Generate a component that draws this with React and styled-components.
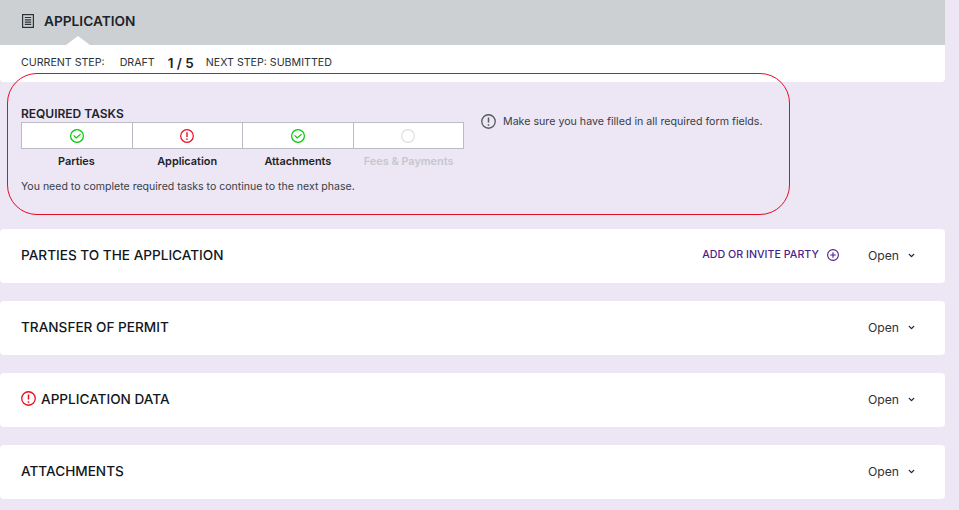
import React from "react";
import styled, { createGlobalStyle } from "styled-components";
import { ChevronDown } from "lucide-react";

const tasks = [
  { name: "Parties", status: "done" },
  { name: "Application", status: "error" },
  { name: "Attachments", status: "done" },
  { name: "Fees & Payments", status: "idle" },
];

function CheckIcon() {
  return (
    <svg width="14" height="14" viewBox="0 0 14 14" fill="none" stroke="#00c800" strokeWidth="1.2">
      <circle cx="7" cy="7" r="6.4" />
      <path d="M3.6 6.4l2.6 2.6 4.4-3.9" />
    </svg>
  );
}

function AlertIcon({ color = "#f00a1e", size = 14, width = 1.2 }) {
  return (
    <svg width={size} height={size} viewBox="0 0 14 14" fill="none" stroke={color} strokeWidth={width}>
      <circle cx="7" cy="7" r="6.3" />
      <path d="M7 3.2v4.8M7 9.6v1.3" strokeWidth="1.4" />
    </svg>
  );
}

function EmptyIcon() {
  return (
    <svg width="14" height="14" viewBox="0 0 14 14" fill="none" stroke="#dfdfe2" strokeWidth="1.2">
      <circle cx="7" cy="7" r="6.4" />
    </svg>
  );
}

function DocIcon() {
  return (
    <svg width="12" height="14" viewBox="0 0 12 14" fill="none" stroke="#2b3238" strokeWidth="1.2">
      <rect x="0.6" y="0.6" width="10.8" height="12.8" />
      <path d="M2.8 3.5h6.4M2.8 5.8h6.4M2.8 8.1h6.4M2.8 10.4h6.4" />
    </svg>
  );
}

function PlusIcon() {
  return (
    <svg width="12" height="12" viewBox="0 0 12 12" fill="none" stroke="#4d1d8c" strokeWidth="1.1">
      <circle cx="6" cy="6" r="5.4" />
      <path d="M6 3.2v5.6M3.2 6h5.6" />
    </svg>
  );
}

function Section({ title, alert, children }) {
  return (
    <Card>
      <CardTitle>
        {alert && <AlertIcon size={15} />}
        {title}
      </CardTitle>
      <CardActions>
        {children}
        <OpenToggle>
          Open
          <ChevronDown size={9} strokeWidth={3.5} color="#1c2329" />
        </OpenToggle>
      </CardActions>
    </Card>
  );
}

export default function App() {
  return (
    <>
      <GlobalStyle />
      <Page>
        <Header>
          <DocIcon />
          <HeaderTitle>APPLICATION</HeaderTitle>
          <Notch />
        </Header>
        <StepRow>
          <StepLabel>CURRENT STEP:</StepLabel>
          <StepDraft>DRAFT</StepDraft>
          <StepCount>1 / 5</StepCount>
          <StepLabel>NEXT STEP: SUBMITTED</StepLabel>
        </StepRow>
        <TasksArea>
          <TasksColumn>
            <TasksTitle>REQUIRED TASKS</TasksTitle>
            <TaskGrid>
              {tasks.map((t) => (
                <TaskCell key={t.name}>
                  {t.status === "done" && <CheckIcon />}
                  {t.status === "error" && <AlertIcon />}
                  {t.status === "idle" && <EmptyIcon />}
                </TaskCell>
              ))}
            </TaskGrid>
            <TaskLabels>
              {tasks.map((t) => (
                <TaskLabel key={t.name} $muted={t.status === "idle"}>
                  {t.name}
                </TaskLabel>
              ))}
            </TaskLabels>
            <TasksNote>You need to complete required tasks to continue to the next phase.</TasksNote>
          </TasksColumn>
          <Hint>
            <AlertIcon color="#55585c" size={15} />
            Make sure you have filled in all required form fields.
          </Hint>
        </TasksArea>
        <Section title="PARTIES TO THE APPLICATION">
          <AddParty>
            ADD OR INVITE PARTY
            <PlusIcon />
          </AddParty>
        </Section>
        <Section title="TRANSFER OF PERMIT" />
        <Section title="APPLICATION DATA" alert />
        <Section title="ATTACHMENTS" />
        <Highlight />
      </Page>
    </>
  );
}

const GlobalStyle = createGlobalStyle`
  html, body {
    margin: 0;
    padding: 0;
    background: #ece6f5;
  }
  body {
    font-family: "Inter", "Liberation Sans", sans-serif;
    color: #1c2329;
  }
`;

const Page = styled.div`
  position: relative;
  width: 945px;
  height: 510px;
  overflow: hidden;
`;

const Header = styled.div`
  position: relative;
  height: 45px;
  background: #ccd0d3;
  display: flex;
  align-items: center;
  gap: 10px;
  padding: 0 0 4px 22px;
  box-sizing: border-box;
`;

const HeaderTitle = styled.span`
  font-size: 13.7px;
  font-weight: 600;
  color: #1c2329;
`;

const Notch = styled.div`
  position: absolute;
  left: 66px;
  bottom: 0;
  width: 0;
  height: 0;
  border-left: 12px solid transparent;
  border-right: 12px solid transparent;
  border-bottom: 9px solid #fff;
`;

const StepRow = styled.div`
  height: 37px;
  box-sizing: border-box;
  background: #fff;
  border-radius: 0 0 4px 4px;
  display: flex;
  align-items: center;
  padding: 0 0 2px 21px;
`;

const StepLabel = styled.span`
  font-size: 10.65px;
  color: #2b3238;
`;

const StepDraft = styled(StepLabel)`
  margin-left: 15px;
`;

const StepCount = styled.span`
  font-size: 13.5px;
  font-weight: 600;
  margin: 0 12px 0 13px;
  color: #1c2329;
`;

const TasksArea = styled.div`
  height: 147px;
  box-sizing: border-box;
  padding: 25px 0 0 21px;
  display: flex;
  align-items: flex-start;
`;

const TasksColumn = styled.div`
  width: 443px;
`;

const TasksTitle = styled.div`
  font-size: 12px;
  font-weight: 600;
  line-height: 14px;
  color: #1c2329;
`;

const TaskGrid = styled.div`
  display: grid;
  grid-template-columns: 110px 110px 111px 110px;
  height: 27px;
  margin-top: 1px;
  box-sizing: border-box;
  background: #fff;
  border: 1px solid #b9bcc4;
`;

const TaskCell = styled.div`
  display: flex;
  align-items: center;
  justify-content: center;
  & + & {
    border-left: 1px solid #b9bcc4;
    padding-right: 1px;
  }
`;

const TaskLabels = styled.div`
  display: grid;
  grid-template-columns: repeat(4, 1fr);
  margin-top: 5px;
`;

const TaskLabel = styled.div`
  font-size: 10.9px;
  font-weight: 600;
  line-height: 14px;
  text-align: center;
  color: ${(p) => (p.$muted ? "#c6c6cf" : "#1c2329")};
`;

const TasksNote = styled.div`
  font-size: 10.56px;
  line-height: 14px;
  margin-top: 12px;
  color: #3a4046;
`;

const Hint = styled.div`
  display: flex;
  align-items: center;
  gap: 7px;
  margin: 7px 0 0 17px;
  font-size: 10.67px;
  line-height: 14px;
  color: #3a4046;
`;

const Card = styled.div`
  height: 54px;
  margin-bottom: 18px;
  box-sizing: border-box;
  background: #fff;
  border-radius: 4px;
  display: flex;
  align-items: center;
  justify-content: space-between;
  padding: 0 29px 3px 21px;
`;

const CardTitle = styled.div`
  display: flex;
  align-items: center;
  gap: 5px;
  font-size: 13.6px;
  font-weight: 500;
  color: #10171d;
`;

const CardActions = styled.div`
  display: flex;
  align-items: center;
`;

const AddParty = styled.div`
  display: flex;
  align-items: center;
  gap: 8px;
  margin-right: 29px;
  font-size: 10.7px;
  font-weight: 500;
  color: #4d1d8c;
`;

const OpenToggle = styled.div`
  display: flex;
  align-items: center;
  gap: 8px;
  margin-top: 2px;
  font-size: 12.2px;
  color: #2b3238;
`;

const Highlight = styled.div`
  position: absolute;
  left: 7px;
  top: 73px;
  width: 783px;
  height: 142px;
  box-sizing: border-box;
  border: 1px solid #e30e22;
  border-radius: 30px;
  pointer-events: none;
`;
